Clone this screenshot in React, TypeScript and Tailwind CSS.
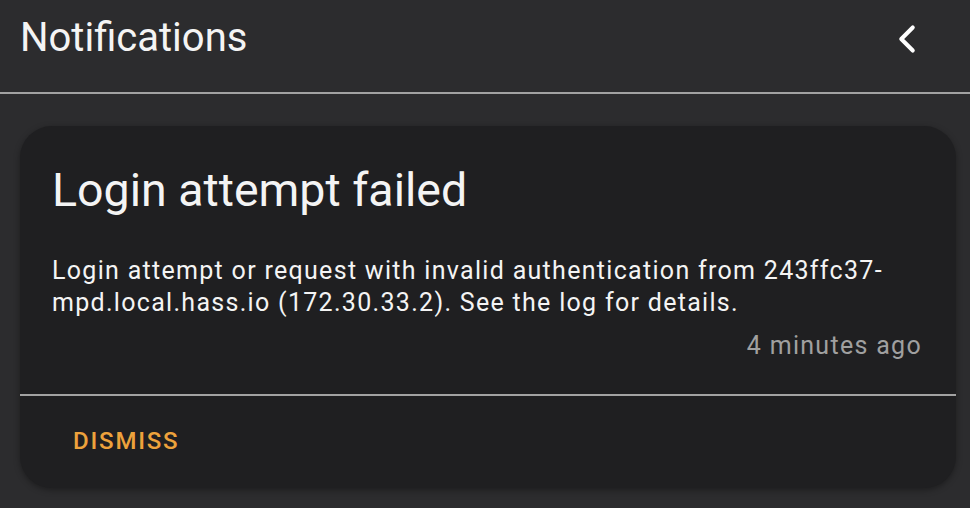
import { ChevronLeft } from "lucide-react";

export default function App() {
    return (
        <div className="w-[970px] h-[508px] overflow-hidden bg-[#2c2c2e] font-['Roboto',sans-serif] text-[#f4f4f4]">
            <div className="h-[94px] flex justify-between border-b-2 border-[#a2a2a2]">
                <h1 className="pl-[20px] pt-[14px] text-[40px] leading-[48px] font-normal">Notifications</h1>
                <button className="w-[48px] h-[48px] mr-[39px] mt-[15px] flex items-center justify-center text-white">
                    <ChevronLeft size={46} strokeWidth={2.1} />
                </button>
            </div>
            <div className="ml-[20px] mr-[14px] mt-[32px] h-[362px] rounded-[32px] bg-[#1f1f21] shadow-[0_2px_6px_rgba(0,0,0,0.35)] flex flex-col">
                <div className="pl-[32px] pr-[34px] pt-[36px]">
                    <h2 className="text-[46.5px] leading-[56px] font-normal">Login attempt failed</h2>
                    <p className="mt-[37px] text-[25px] leading-[32px] tracking-[1.3px]">
                        Login attempt or request with invalid authentication from 243ffc37-mpd.local.hass.io (172.30.33.2). See the log for details.
                    </p>
                    <div className="mt-[11px] text-right text-[25px] leading-[32px] tracking-[1.3px] text-[#a0a0a0]">4 minutes ago</div>
                </div>
                <div className="mt-[32px] border-t-2 border-[#a2a2a2]" />
                <div className="pl-[53px] pt-[29px]">
                    <button className="text-[24px] leading-[32px] font-medium tracking-[0.075em] text-[#eda23c]">DISMISS</button>
                </div>
            </div>
        </div>
    );
}
